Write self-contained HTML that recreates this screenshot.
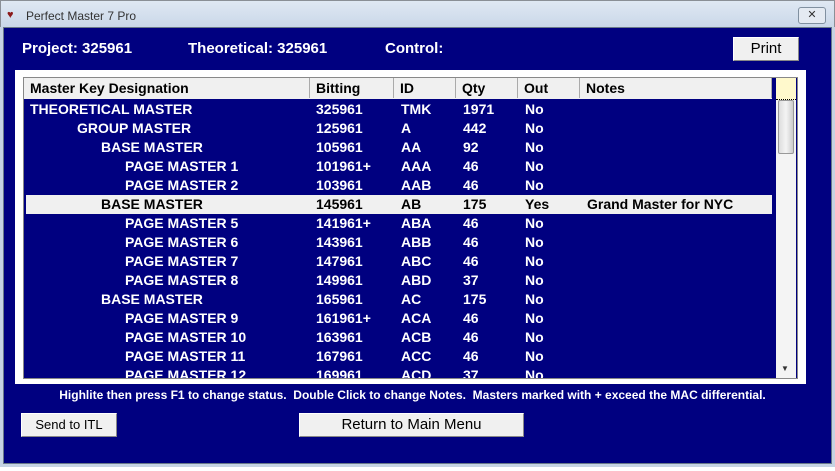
<html><head><style>
body{margin:0;width:835px;height:471px;overflow:hidden;background:#fff;font-family:"Liberation Sans",Arial,sans-serif;position:relative}
.title{position:absolute;left:0;top:0;width:833px;height:27px;border:1px solid #8a8f96;border-bottom:none;background:linear-gradient(#dfe8f3,#c9d7e8);}
.title span{position:absolute;left:25px;top:8px;font-size:12px;color:#333}
.x{position:absolute;right:8px;top:6px;width:26px;height:15px;border:1px solid #8090a0;border-radius:3px;background:#e4eaf2;font-size:11px;text-align:center;line-height:15px;color:#333}
.main{position:absolute;left:0;top:27px;width:829px;height:437px;background:#000080;border:3px solid #c6d3e3;border-top:none;box-shadow:inset 0 0 0 1px #6a7a8a}
.hd{position:absolute;top:40px;color:#fff;font-weight:bold;font-size:15px}
.btn{position:absolute;background:#f0f0f0;border:1px solid #fff;border-right-color:#888;border-bottom-color:#888;text-align:center;color:#000}
.panel{position:absolute;left:15px;top:70px;width:791px;height:314px;background:#fff}
.list{position:absolute;left:23px;top:77px;width:773px;height:300px;border:1px solid #888;background:#000080;overflow:hidden}
.hrow{position:absolute;left:0;top:0;width:748px;height:21px;background:#f0f0f0}
.hrow div{position:absolute;top:0;height:20px;border-right:1px solid #aaa;font-weight:bold;font-size:14px;line-height:21px;padding-left:6px;box-sizing:border-box}
.row{position:absolute;left:2px;width:746px;height:19px;color:#fff;font-weight:bold;font-size:14px;line-height:19px}
.row span{position:absolute;top:0}
.sel{background:#f0f0f0;color:#000}
.sb{position:absolute;left:752px;top:0;width:20px;height:300px;background:#f4f4f4}
</style></head><body>
<div class="title"><span>Perfect Master 7 Pro</span><div style="position:absolute;left:6px;top:8px;color:#8b1a1a;font-size:11px">♥</div><div class="x">✕</div></div>
<div class="main"></div>
<div class="hd" style="left:22px">Project: 325961</div>
<div class="hd" style="left:188px">Theoretical: 325961</div>
<div class="hd" style="left:385px">Control:</div>
<div class="btn" style="left:733px;top:37px;width:64px;height:22px;font-size:15px;line-height:22px">Print</div>
<div class="panel"></div>
<div class="list">
<div class="hrow">
<div style="left:0;width:286px">Master Key Designation</div>
<div style="left:286px;width:84px">Bitting</div>
<div style="left:370px;width:62px">ID</div>
<div style="left:432px;width:62px">Qty</div>
<div style="left:494px;width:62px">Out</div>
<div style="left:556px;width:192px">Notes</div>
</div>
<div class="sb"><div style="height:21px;background:#fff9cc;border-bottom:1px dotted #000"></div><div style="position:absolute;left:2px;top:22px;width:14px;height:52px;background:linear-gradient(90deg,#ddd,#f4f4f4,#ccc);border:1px solid #999;border-radius:2px"></div><div style="position:absolute;left:5px;bottom:5px;font-size:8px;color:#333">▼</div></div>
<div class="row" style="top:22px"><span style="left:4px">THEORETICAL MASTER</span><span style="left:290px">325961</span><span style="left:375px">TMK</span><span style="left:437px">1971</span><span style="left:499px">No</span></div>
<div class="row" style="top:41px"><span style="left:51px">GROUP MASTER</span><span style="left:290px">125961</span><span style="left:375px">A</span><span style="left:437px">442</span><span style="left:499px">No</span></div>
<div class="row" style="top:60px"><span style="left:75px">BASE MASTER</span><span style="left:290px">105961</span><span style="left:375px">AA</span><span style="left:437px">92</span><span style="left:499px">No</span></div>
<div class="row" style="top:79px"><span style="left:99px">PAGE MASTER 1</span><span style="left:290px">101961+</span><span style="left:375px">AAA</span><span style="left:437px">46</span><span style="left:499px">No</span></div>
<div class="row" style="top:98px"><span style="left:99px">PAGE MASTER 2</span><span style="left:290px">103961</span><span style="left:375px">AAB</span><span style="left:437px">46</span><span style="left:499px">No</span></div>
<div class="row sel" style="top:117px"><span style="left:75px">BASE MASTER</span><span style="left:290px">145961</span><span style="left:375px">AB</span><span style="left:437px">175</span><span style="left:499px">Yes</span><span style="left:561px">Grand Master for NYC</span></div>
<div class="row" style="top:136px"><span style="left:99px">PAGE MASTER 5</span><span style="left:290px">141961+</span><span style="left:375px">ABA</span><span style="left:437px">46</span><span style="left:499px">No</span></div>
<div class="row" style="top:155px"><span style="left:99px">PAGE MASTER 6</span><span style="left:290px">143961</span><span style="left:375px">ABB</span><span style="left:437px">46</span><span style="left:499px">No</span></div>
<div class="row" style="top:174px"><span style="left:99px">PAGE MASTER 7</span><span style="left:290px">147961</span><span style="left:375px">ABC</span><span style="left:437px">46</span><span style="left:499px">No</span></div>
<div class="row" style="top:193px"><span style="left:99px">PAGE MASTER 8</span><span style="left:290px">149961</span><span style="left:375px">ABD</span><span style="left:437px">37</span><span style="left:499px">No</span></div>
<div class="row" style="top:212px"><span style="left:75px">BASE MASTER</span><span style="left:290px">165961</span><span style="left:375px">AC</span><span style="left:437px">175</span><span style="left:499px">No</span></div>
<div class="row" style="top:231px"><span style="left:99px">PAGE MASTER 9</span><span style="left:290px">161961+</span><span style="left:375px">ACA</span><span style="left:437px">46</span><span style="left:499px">No</span></div>
<div class="row" style="top:250px"><span style="left:99px">PAGE MASTER 10</span><span style="left:290px">163961</span><span style="left:375px">ACB</span><span style="left:437px">46</span><span style="left:499px">No</span></div>
<div class="row" style="top:269px"><span style="left:99px">PAGE MASTER 11</span><span style="left:290px">167961</span><span style="left:375px">ACC</span><span style="left:437px">46</span><span style="left:499px">No</span></div>
<div class="row" style="top:288px"><span style="left:99px">PAGE MASTER 12</span><span style="left:290px">169961</span><span style="left:375px">ACD</span><span style="left:437px">37</span><span style="left:499px">No</span></div>
</div>
<div style="position:absolute;left:0;width:825px;top:388px;text-align:center;color:#fff;font-weight:bold;font-size:12px">Highlite then press F1 to change status.&nbsp; Double Click to change Notes.&nbsp; Masters marked with + exceed the MAC differential.</div>
<div class="btn" style="left:21px;top:413px;width:94px;height:22px;font-size:13px;line-height:22px">Send to ITL</div>
<div class="btn" style="left:299px;top:413px;width:223px;height:22px;font-size:15px;line-height:22px">Return to Main Menu</div>
</body></html>
